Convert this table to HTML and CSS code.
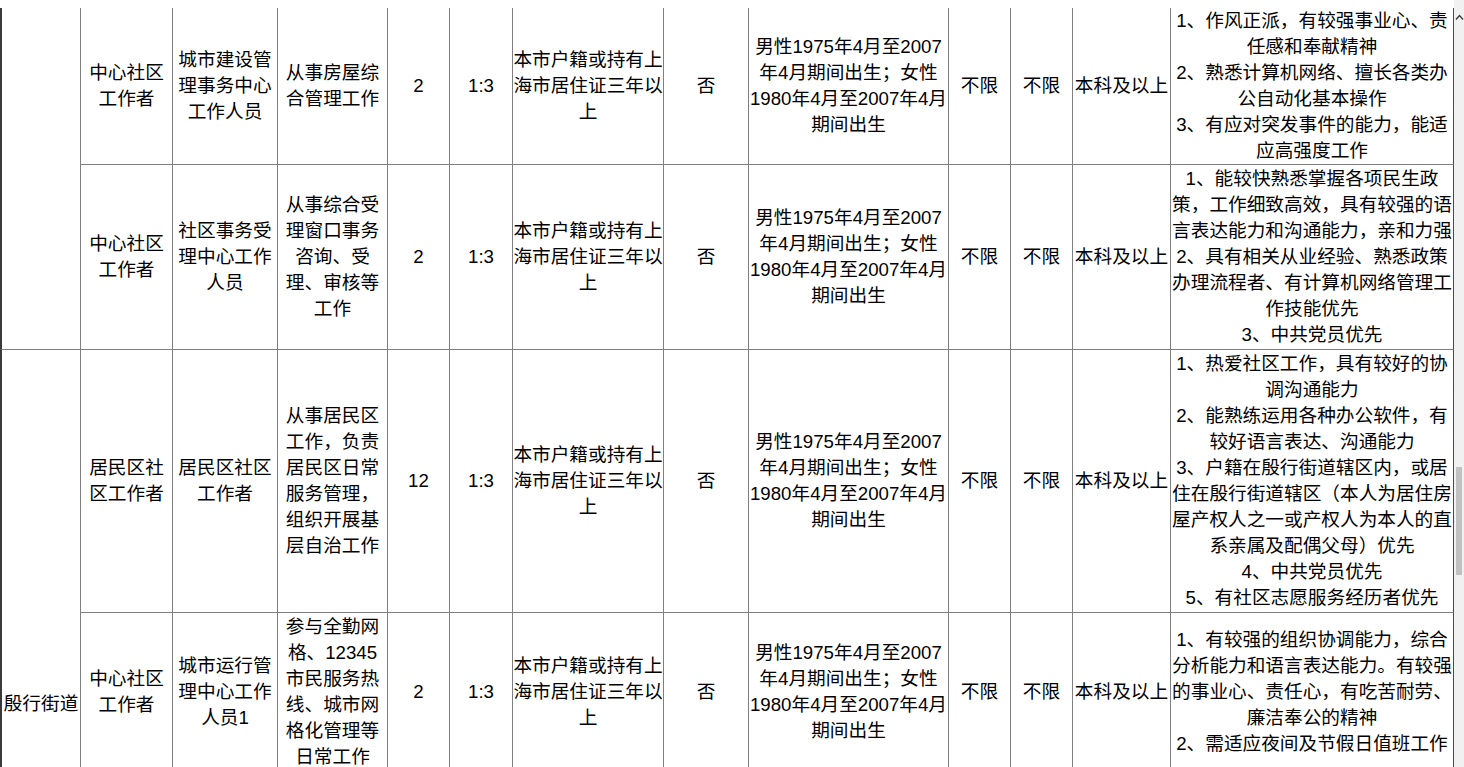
FILE: index.html
```html
<!DOCTYPE html>
<html lang="zh-CN">
<head>
<meta charset="utf-8">
<title>岗位表</title>
<link rel="stylesheet" href="styles.css">
</head>
<body>
<div class="screen">
  <main class="sheet">
    <table class="jobs">
      <colgroup>
        <col class="w1"><col class="w2"><col class="w3"><col class="w4"><col class="w5"><col class="w6"><col class="w7"><col class="w8"><col class="w9"><col class="w10"><col class="w11"><col class="w12"><col class="w13">
      </colgroup>
      <tbody>
        <tr class="first">
          <td class="street" rowspan="2"></td>
          <td>中心社区工作者</td>
          <td>城市建设管理事务中心工作人员</td>
          <td>从事房屋综合管理工作</td>
          <td>2</td>
          <td>1:3</td>
          <td>本市户籍或持有上海市居住证三年以上</td>
          <td>否</td>
          <td>男性1975年4月至2007年4月期间出生；女性1980年4月至2007年4月期间出生</td>
          <td>不限</td>
          <td>不限</td>
          <td>本科及以上</td>
          <td class="req">1、作风正派，有较强事业心、责任感和奉献精神<br>2、熟悉计算机网络、擅长各类办公自动化基本操作<br>3、有应对突发事件的能力，能适应高强度工作</td>
        </tr>
        <tr>
          <td>中心社区工作者</td>
          <td>社区事务受理中心工作人员</td>
          <td>从事综合受理窗口事务咨询、受理、审核等工作</td>
          <td>2</td>
          <td>1:3</td>
          <td>本市户籍或持有上海市居住证三年以上</td>
          <td>否</td>
          <td>男性1975年4月至2007年4月期间出生；女性1980年4月至2007年4月期间出生</td>
          <td>不限</td>
          <td>不限</td>
          <td>本科及以上</td>
          <td class="req">1、能较快熟悉掌握各项民生政<br>策，工作细致高效，具有较强的语言表达能力和沟通能力，亲和力强<br>2、具有相关从业经验、熟悉政策办理流程者、有计算机网络管理工作技能优先<br>3、中共党员优先</td>
        </tr>
        <tr>
          <td class="street" rowspan="3">殷行街道</td>
          <td>居民区社区工作者</td>
          <td>居民区社区工作者</td>
          <td>从事居民区工作，负责居民区日常服务管理，组织开展基层自治工作</td>
          <td>12</td>
          <td>1:3</td>
          <td>本市户籍或持有上海市居住证三年以上</td>
          <td>否</td>
          <td>男性1975年4月至2007年4月期间出生；女性1980年4月至2007年4月期间出生</td>
          <td>不限</td>
          <td>不限</td>
          <td>本科及以上</td>
          <td class="req">1、热爱社区工作，具有较好的协调沟通能力<br>2、能熟练运用各种办公软件，有较好语言表达、沟通能力<br>3、户籍在殷行街道辖区内，或居住在殷行街道辖区（本人为居住房屋产权人之一或产权人为本人的直系亲属及配偶父母）优先<br>4、中共党员优先<br>5、有社区志愿服务经历者优先</td>
        </tr>
        <tr>
          <td>中心社区工作者</td>
          <td>城市运行管理中心工作人员1</td>
          <td>参与全勤网格、12345<br>市民服务热线、城市网格化管理等日常工作</td>
          <td>2</td>
          <td>1:3</td>
          <td>本市户籍或持有上海市居住证三年以上</td>
          <td>否</td>
          <td>男性1975年4月至2007年4月期间出生；女性1980年4月至2007年4月期间出生</td>
          <td>不限</td>
          <td>不限</td>
          <td>本科及以上</td>
          <td class="req">1、有较强的组织协调能力，综合分析能力和语言表达能力。有较强的事业心、责任心，有吃苦耐劳、廉洁奉公的精神<br>2、需适应夜间及节假日值班工作</td>
        </tr>
        <tr class="rest">
          <td></td><td></td><td></td><td></td><td></td><td></td><td></td><td></td><td></td><td></td><td></td><td class="req"></td>
        </tr>
      </tbody>
    </table>
  </main>
  <div class="scrollbar">
    <svg class="arrow" width="9" height="7" viewBox="0 0 9 7" aria-hidden="true"><path d="M1 5.5 L4.5 1.5 L8 5.5" fill="none" stroke="#3c3c3c" stroke-width="1.4"/></svg>
    <span class="thumb"></span>
  </div>
</div>
</body>
</html>
```

FILE: styles.css
```css
html, body {
  margin: 0;
  padding: 0;
  background: #ffffff;
}

.screen {
  display: flex;
  width: 1464px;
  height: 767px;
  overflow: hidden;
}

.sheet {
  width: 1454px;
  flex: none;
  padding-top: 8px;
  overflow: hidden;
}

.jobs {
  table-layout: fixed;
  width: 1454px;
  border-collapse: separate;
  border-spacing: 0;
  font-family: "Liberation Sans", "Noto Sans CJK SC", sans-serif;
  font-size: 18.67px;
  line-height: 26px;
  color: #000000;
}

.w1 { width: 81px; }
.w2 { width: 92px; }
.w3 { width: 105px; }
.w4 { width: 110px; }
.w5 { width: 62px; }
.w6 { width: 63px; }
.w7 { width: 151px; }
.w8 { width: 85px; }
.w9 { width: 200px; }
.w10 { width: 62px; }
.w11 { width: 62px; }
.w12 { width: 98px; }
.w13 { width: 283px; }

.jobs td {
  padding: 1px 0;
  border-right: 1px solid #7f7f7f;
  border-bottom: 1px solid #7f7f7f;
  text-align: center;
  vertical-align: middle;
}

.jobs td.street {
  border-left: 2px solid #3a3a3a;
}

.jobs td.req {
  border-right-color: #4a4a4a;
}

.jobs tr.first td {
  padding-top: 0;
  padding-bottom: 0;
}

.jobs tr.rest {
  height: 287px;
}

.scrollbar {
  width: 10px;
  flex: none;
  background: #f1f1f1;
  display: flex;
  flex-direction: column;
  align-items: center;
}

.arrow {
  display: block;
  flex: none;
  margin-top: 14px;
}

.thumb {
  width: 6px;
  height: 108px;
  margin-top: 446px;
  background: #c1c1c1;
}
```
